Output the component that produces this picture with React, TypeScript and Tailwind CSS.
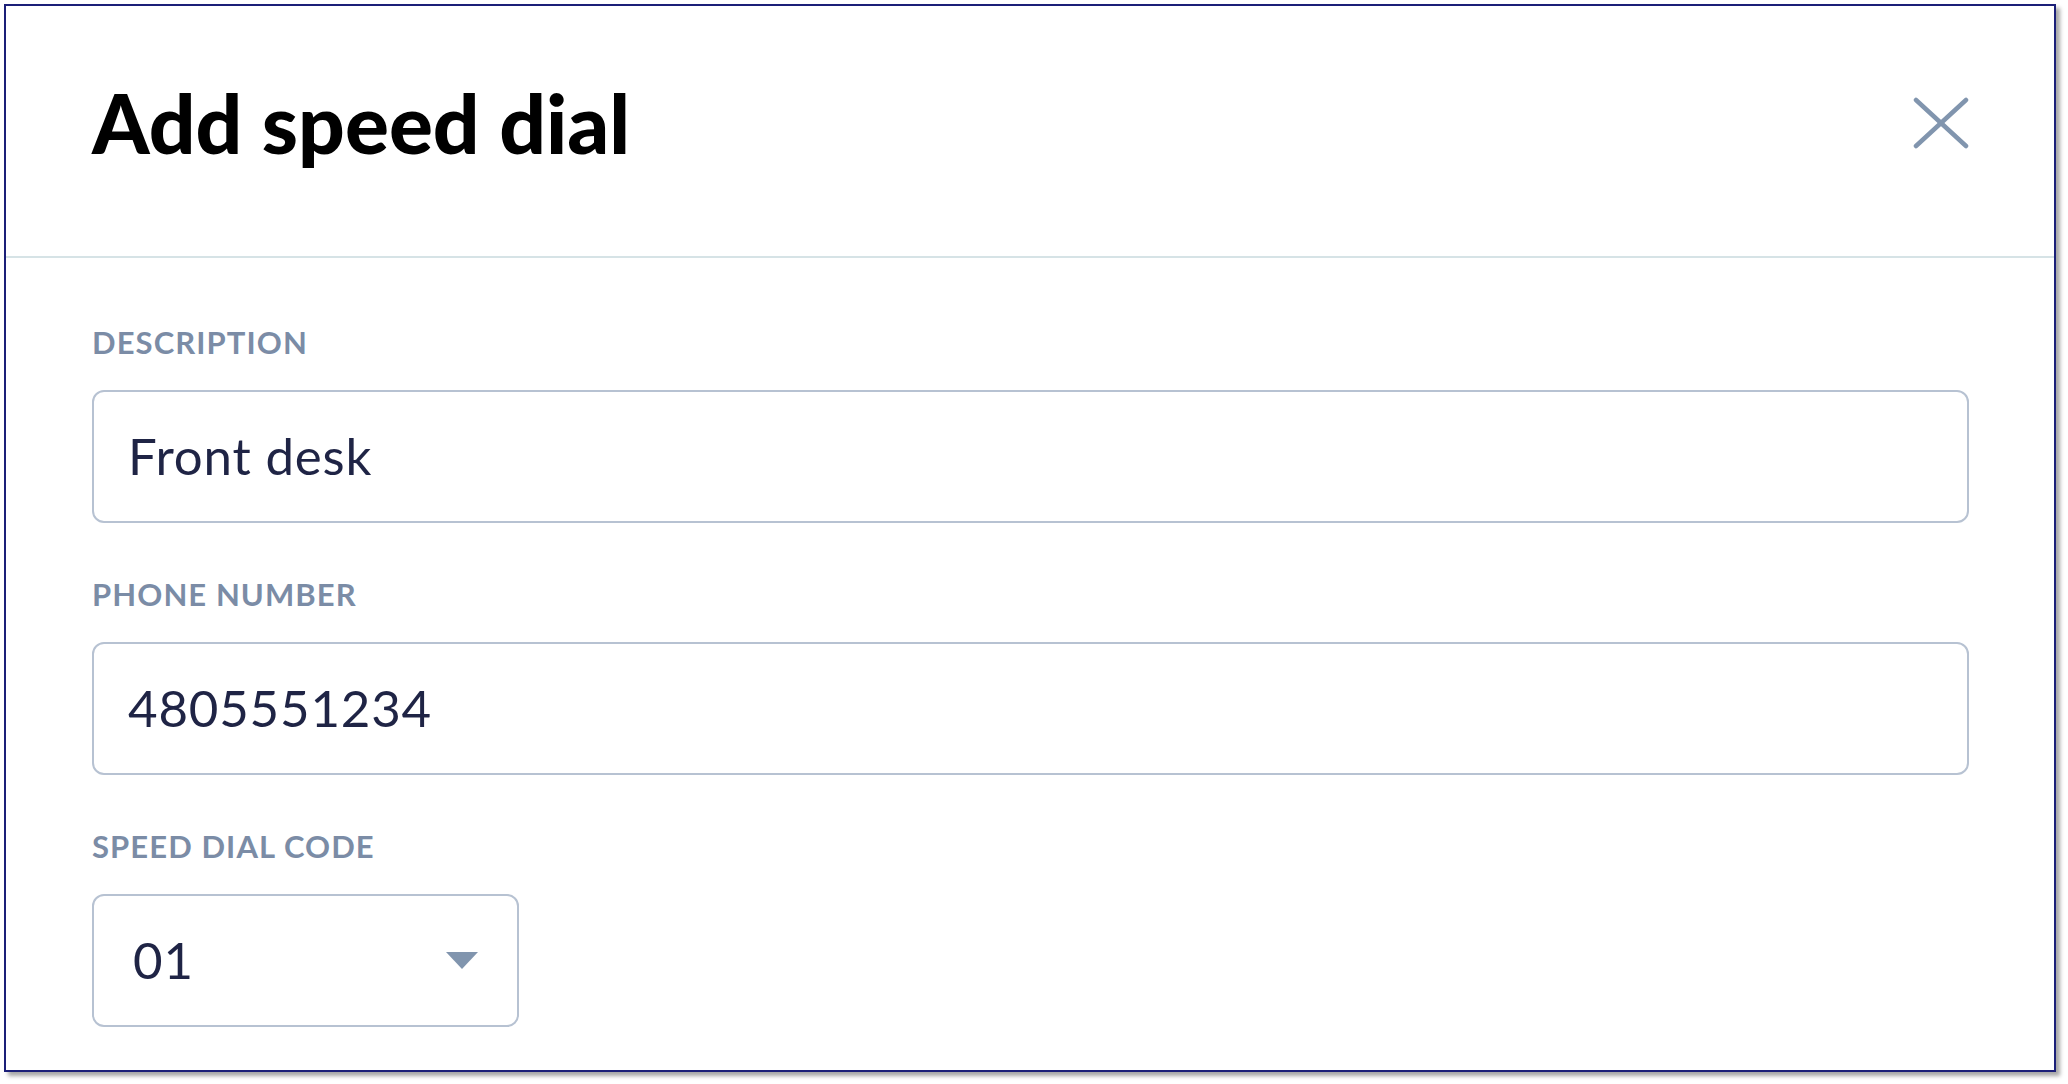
import React from 'react';

function Label({ children }: { children: React.ReactNode }) {
  return (
    <div className="text-[31px] leading-[36px] font-bold tracking-[0.035em] text-[#7b8ca6] mb-[30px]">
      {children}
    </div>
  );
}

function TextBox({ value }: { value: string }) {
  return (
    <div className="h-[133px] w-full border-2 border-[#b7c2d2] rounded-[12px] flex items-center pl-[34px] text-[51px] tracking-[0.016em] text-[#1f2445]">
      {value}
    </div>
  );
}

export default function App() {
  return (
    <div className="min-h-screen bg-white font-[Lato,sans-serif]">
      <div className="ml-[4px] pt-[4px]">
        <div className="w-[2052px] h-[1068px] border-2 border-[#1b1f78] bg-white shadow-[4px_4px_4px_rgba(0,0,0,0.35)] flex flex-col">
          {/* header */}
          <div className="h-[252px] pt-[67px] pl-[86px] pr-[85px] border-b-2 border-[#d6e3e6]">
            <div className="flex items-center justify-between h-[98px]">
              <h1 className="text-[82px] leading-[98px] font-black text-black">Add speed dial</h1>
              <svg width="56" height="52" viewBox="0 0 56 52" className="mt-[2px]">
                <line x1="3" y1="3" x2="53" y2="49" stroke="#8195ae" strokeWidth="4.5" strokeLinecap="round" />
                <line x1="53" y1="3" x2="3" y2="49" stroke="#8195ae" strokeWidth="4.5" strokeLinecap="round" />
              </svg>
            </div>
          </div>

          {/* form */}
          <div className="pt-[66px] pl-[86px] pr-[85px] flex flex-col gap-[53px]">
            <div>
              <Label>DESCRIPTION</Label>
              <TextBox value="Front desk" />
            </div>
            <div>
              <Label>PHONE NUMBER</Label>
              <TextBox value="4805551234" />
            </div>
            <div>
              <Label>SPEED DIAL CODE</Label>
              <div className="h-[133px] w-[427px] border-2 border-[#b7c2d2] rounded-[12px] flex items-center justify-between pl-[39px] pr-[39px] text-[51px] tracking-[0.016em] text-[#1f2445]">
                <span>01</span>
                <svg width="32" height="17" viewBox="0 0 32 17">
                  <polygon points="0,0 32,0 16,17" fill="#8195ae" />
                </svg>
              </div>
            </div>
          </div>
        </div>
      </div>
    </div>
  );
}
